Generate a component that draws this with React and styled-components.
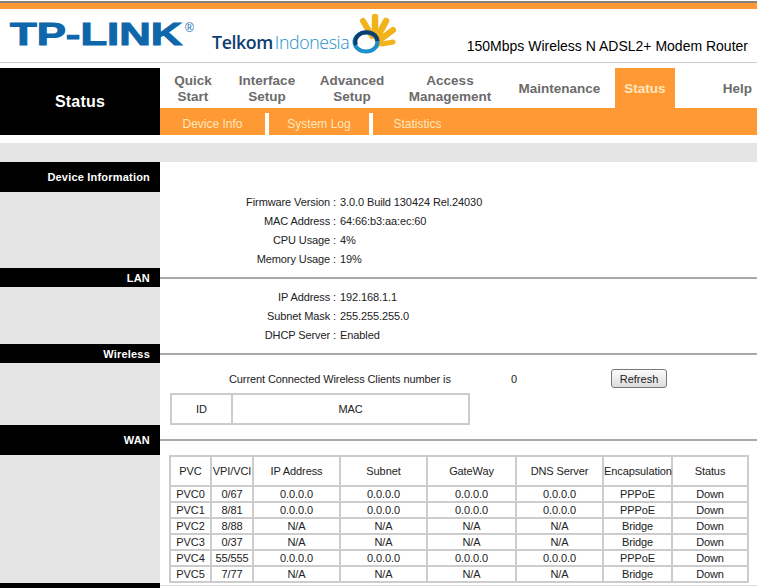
import React from 'react';
import styled, { createGlobalStyle } from 'styled-components';

const GlobalStyle = createGlobalStyle`
  html, body {
    margin: 0;
    padding: 0;
    background: #ffffff;
    overflow: hidden;
  }
  body {
    font-family: "Liberation Sans", Arial, sans-serif;
    font-size: 11px;
    letter-spacing: -0.1px;
    color: #222222;
  }
`;

const NAV_ITEMS = [
  { label: ['Quick', 'Start'], width: 66 },
  { label: ['Interface', 'Setup'], width: 82 },
  { label: ['Advanced', 'Setup'], width: 88 },
  { label: ['Access', 'Management'], width: 108 },
  { label: ['Maintenance'], width: 111 },
  { label: ['Status'], width: 60, active: true },
  { label: ['Help'], width: 125 },
];

const DEVICE_ROWS = [
  ['Firmware Version :', '3.0.0 Build 130424 Rel.24030'],
  ['MAC Address :', '64:66:b3:aa:ec:60'],
  ['CPU Usage :', '4%'],
  ['Memory Usage :', '19%'],
];

const LAN_ROWS = [
  ['IP Address :', '192.168.1.1'],
  ['Subnet Mask :', '255.255.255.0'],
  ['DHCP Server :', 'Enabled'],
];

const WAN_COLS = [41, 42, 87, 87, 89, 87, 69, 76];
const WAN_HEAD = ['PVC', 'VPI/VCI', 'IP Address', 'Subnet', 'GateWay', 'DNS Server', 'Encapsulation', 'Status'];
const up = ['0.0.0.0', '0.0.0.0', '0.0.0.0', '0.0.0.0', 'PPPoE', 'Down'];
const bridge = ['N/A', 'N/A', 'N/A', 'N/A', 'Bridge', 'Down'];
const WAN_ROWS = [
  ['PVC0', '0/67', ...up],
  ['PVC1', '8/81', ...up],
  ['PVC2', '8/88', ...bridge],
  ['PVC3', '0/37', ...bridge],
  ['PVC4', '55/555', ...up],
  ['PVC5', '7/77', ...bridge],
];

function TelkomMark() {
  return (
    <MarkSvg width="47" height="44" viewBox="0 0 47 44">
      <g stroke="#f2b21c" strokeLinecap="round" fill="none">
        <path d="M22 24 L13 9" strokeWidth="6" />
        <path d="M25 23 L25 5" strokeWidth="6.5" />
        <path d="M28 24 L36 9" strokeWidth="6.5" />
        <path d="M31 27 L43 18" strokeWidth="6" />
        <path d="M32 32 L43 30" strokeWidth="5" />
      </g>
      <path d="M19 21 C28 19 32 25 31 31 C30 36 26 37 22 37 C27 33 26 26 19 21 Z" fill="#f2b21c" />
      <ellipse cx="16" cy="30" rx="11.5" ry="9.5" fill="none" stroke="#1d8fc9" strokeWidth="4" />
      <path d="M6 33 C3 25 11 19 19 20.5 C24 21.5 27 25 27.5 29" fill="none" stroke="#0d3f73" strokeWidth="4" />
    </MarkSvg>
  );
}

export default function App() {
  return (
    <Page>
      <GlobalStyle />
      <TopStripe />
      <Header>
        <BrandBox>
          <Brand>TP-LINK</Brand>
        </BrandBox>
        <Registered>®</Registered>
        <Telkom>
          <TelkomStrong>Telkom</TelkomStrong>
          <TelkomLight>Indonesia</TelkomLight>
        </Telkom>
        <TelkomMark />
        <Product>150Mbps Wireless N ADSL2+ Modem Router</Product>
      </Header>

      <NavArea>
        <PageTitle>Status</PageTitle>
        <NavColumn>
          <MainNav>
            {NAV_ITEMS.map((item) => (
              <NavItem key={item.label[0]} $width={item.width} $active={item.active}>
                {item.label.map((line) => (
                  <span key={line}>{line}</span>
                ))}
              </NavItem>
            ))}
          </MainNav>
          <SubNav>
            <SubItem $width={105}>Device Info</SubItem>
            <SubDivider />
            <SubItem $width={100}>System Log</SubItem>
            <SubDivider />
            <SubItem $width={89}>Statistics</SubItem>
          </SubNav>
        </NavColumn>
      </NavArea>

      <GrayBand />

      <Section $head={30}>
        <SideHead>Device Information</SideHead>
        <HeadRule $hidden />
        <SideFill />
        <InfoList>
          {DEVICE_ROWS.map(([label, value]) => (
            <InfoRow key={label}>
              <InfoLabel>{label}</InfoLabel>
              <span>{value}</span>
            </InfoRow>
          ))}
        </InfoList>
      </Section>

      <Section $head={19}>
        <SideHead>LAN</SideHead>
        <HeadRule />
        <SideFill />
        <InfoList>
          {LAN_ROWS.map(([label, value]) => (
            <InfoRow key={label}>
              <InfoLabel>{label}</InfoLabel>
              <span>{value}</span>
            </InfoRow>
          ))}
        </InfoList>
      </Section>

      <Section $head={19}>
        <SideHead>Wireless</SideHead>
        <HeadRule />
        <SideFill />
        <WirelessBody>
          <ClientsRow>
            <ClientsLabel>Current Connected Wireless Clients number is</ClientsLabel>
            <ClientsCount>0</ClientsCount>
            <RefreshButton type="button">Refresh</RefreshButton>
          </ClientsRow>
          <ClientsTable>
            <colgroup>
              <col style={{ width: 61 }} />
              <col style={{ width: 237 }} />
            </colgroup>
            <tbody>
              <tr>
                <Cell>ID</Cell>
                <Cell>MAC</Cell>
              </tr>
            </tbody>
          </ClientsTable>
        </WirelessBody>
      </Section>

      <Section $head={30}>
        <SideHead>WAN</SideHead>
        <HeadRule />
        <SideFill />
        <WanBody>
          <WanTable>
            <colgroup>
              {WAN_COLS.map((width, i) => (
                <col key={i} style={{ width }} />
              ))}
            </colgroup>
            <thead>
              <tr>
                {WAN_HEAD.map((title) => (
                  <HeadCell key={title}>{title}</HeadCell>
                ))}
              </tr>
            </thead>
            <tbody>
              {WAN_ROWS.map((row) => (
                <tr key={row[0]}>
                  {row.map((value, i) => (
                    <Cell key={i}>{value}</Cell>
                  ))}
                </tr>
              ))}
            </tbody>
          </WanTable>
        </WanBody>
      </Section>

      <Footer>
        <FooterSide />
        <FooterRule />
      </Footer>
    </Page>
  );
}

const Page = styled.div`
  width: 757px;
  height: 588px;
  overflow: hidden;
  background: #ffffff;
`;

const TopStripe = styled.div`
  height: 5px;
  margin-top: 1px;
  border-top: 2px solid #8a8178;
  background: #ff9933;
  margin-bottom: 0;
  padding-bottom: 1px;
`;

const Header = styled.div`
  display: flex;
  align-items: flex-start;
  height: 53px;
  margin-bottom: 5px;
  padding-left: 10px;
  box-sizing: content-box;
  border-bottom: 1px solid #cccccc;
`;

const BrandBox = styled.div`
  width: 175px;
  margin-top: 10px;
`;

const Brand = styled.div`
  font-size: 31px;
  line-height: 31px;
  font-weight: 700;
  letter-spacing: 0;
  color: #0e66ab;
  -webkit-text-stroke: 1px #0e66ab;
  transform: scaleX(1.41);
  transform-origin: left center;
  white-space: nowrap;
`;

const Registered = styled.div`
  width: 27px;
  margin-top: 12px;
  font-size: 12px;
  line-height: 14px;
  color: #0e66ab;
`;

const Telkom = styled.div`
  margin-top: 22px;
  width: 138px;
  white-space: nowrap;
  font-family: "Open Sans", "Liberation Sans", sans-serif;
  font-size: 17.8px;
  line-height: 22px;
  letter-spacing: -0.4px;
`;

const TelkomStrong = styled.span`
  color: #0d3f73;
  font-weight: 600;
`;

const TelkomLight = styled.span`
  margin-left: 2px;
  color: #1d8fc9;
  font-weight: 300;
`;

const MarkSvg = styled.svg`
  flex: none;
  margin-top: 3px;
`;

const Product = styled.div`
  flex: 1;
  margin-top: 28px;
  padding-right: 9px;
  text-align: right;
  font-size: 14px;
  line-height: 18px;
  letter-spacing: 0;
  color: #000000;
  white-space: nowrap;
`;

const NavArea = styled.div`
  display: flex;
  height: 67px;
`;

const PageTitle = styled.div`
  display: flex;
  align-items: center;
  justify-content: center;
  flex: 0 0 160px;
  background: #000000;
  color: #ffffff;
  font-size: 16px;
  font-weight: 700;
  letter-spacing: 0.2px;
`;

const NavColumn = styled.div`
  display: flex;
  flex-direction: column;
  flex: 1;
  min-width: 0;
`;

const MainNav = styled.div`
  display: flex;
  height: 40px;
`;

const NavItem = styled.div`
  display: flex;
  flex: 0 0 ${(p) => p.$width}px;
  flex-direction: column;
  align-items: center;
  justify-content: center;
  padding-top: 1px;
  box-sizing: border-box;
  font-size: 13.5px;
  line-height: 16px;
  font-weight: 700;
  letter-spacing: 0;
  color: ${(p) => (p.$active ? '#ffe7bf' : '#6b6b6b')};
  background: ${(p) => (p.$active ? '#ff9933' : 'transparent')};
`;

const SubNav = styled.div`
  display: flex;
  height: 27px;
  background: #ff9933;
`;

const SubItem = styled.div`
  flex: 0 0 ${(p) => p.$width}px;
  padding-top: 9px;
  text-align: center;
  font-size: 12px;
  line-height: 14px;
  letter-spacing: 0;
  color: #ffe7bf;
`;

const SubDivider = styled.div`
  flex: 0 0 4px;
  margin-top: 5px;
  background: #ffffff;
`;

const GrayBand = styled.div`
  height: 19px;
  margin-top: 8px;
  background: #e5e5e5;
`;

const Section = styled.section`
  display: grid;
  grid-template-columns: 160px 1fr;
  grid-template-rows: ${(p) => p.$head}px auto;
`;

const SideHead = styled.div`
  display: flex;
  align-items: center;
  justify-content: flex-end;
  padding-right: 10px;
  background: #000000;
  color: #ffffff;
  font-weight: 700;
  font-size: 11px;
  letter-spacing: 0.2px;
`;

const HeadRule = styled.div`
  align-self: center;
  height: 2px;
  background: ${(p) => (p.$hidden ? 'transparent' : '#a9a9a9')};
`;

const SideFill = styled.div`
  background: #e5e5e5;
`;

const InfoList = styled.div`
  display: flex;
  flex-direction: column;
`;

const InfoRow = styled.div`
  display: flex;
  gap: 4px;
  height: 19px;
  align-items: center;
`;

const InfoLabel = styled.div`
  width: 176px;
  text-align: right;
`;

const WirelessBody = styled.div`
  display: flex;
  flex-direction: column;
  gap: 5px;
  padding: 6px 0 0 10px;
  height: 62px;
  box-sizing: border-box;
`;

const ClientsRow = styled.div`
  display: flex;
  align-items: center;
  height: 19px;
  padding-left: 59px;
`;

const ClientsLabel = styled.div`
  flex: 0 0 282px;
`;

const ClientsCount = styled.div`
  flex: 0 0 100px;
`;

const RefreshButton = styled.button`
  width: 56px;
  height: 19px;
  padding: 0;
  border: 1px solid #777777;
  border-radius: 3px;
  background: linear-gradient(#fbfbfb, #dcdcdc);
  font-family: inherit;
  font-size: 11px;
  color: #222222;
`;

const ClientsTable = styled.table`
  width: 298px;
  height: 32px;
  table-layout: fixed;
  border-collapse: collapse;
`;

const Cell = styled.td`
  height: 14px;
  padding: 0;
  border: 2px solid #cccccc;
  text-align: center;
  line-height: 14px;
  white-space: nowrap;
  overflow: hidden;
`;

const HeadCell = styled.th`
  height: 28px;
  padding: 0;
  border: 2px solid #cccccc;
  text-align: center;
  font-weight: 400;
  white-space: nowrap;
`;

const WanBody = styled.div`
  height: 128px;
  padding: 0 0 0 9px;
  box-sizing: border-box;
`;

const WanTable = styled.table`
  width: 578px;
  table-layout: fixed;
  border-collapse: collapse;
`;

const Footer = styled.div`
  display: flex;
  height: 5px;
`;

const FooterSide = styled.div`
  flex: 0 0 160px;
  background: #000000;
`;

const FooterRule = styled.div`
  flex: 1;
  height: 1px;
  margin-top: 2px;
  background: #dddddd;
`;
